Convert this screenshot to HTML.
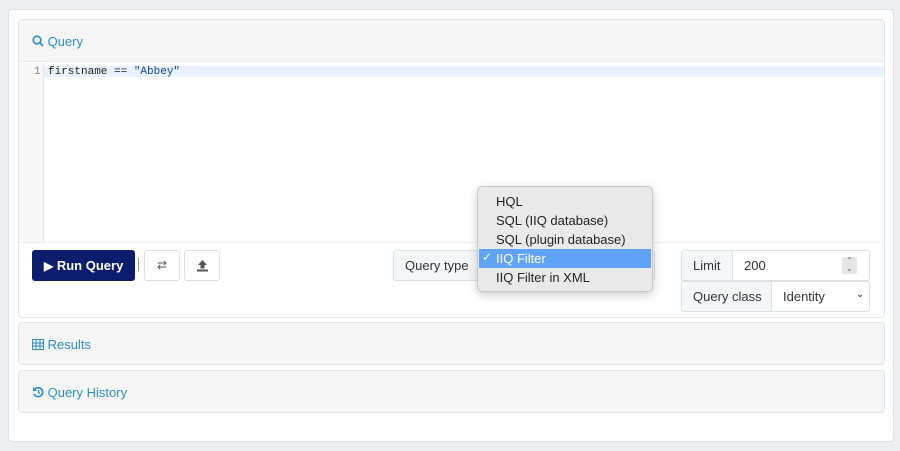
<!DOCTYPE html>
<html><head><style>
*{box-sizing:border-box;margin:0;padding:0}
body{width:900px;height:451px;background:#eceef1;font-family:"Liberation Sans",sans-serif;font-size:13px;color:#333;position:relative;overflow:hidden}
.a{position:absolute}
.card{left:8px;top:9px;width:886px;height:433px;background:#fff;border:1px solid #dde0e5;border-radius:4px}
.panel{left:18px;width:867px;background:#f5f5f5;border:1px solid #dfe2e6;border-radius:4px}
.ttl{color:#2a8fc8;font-size:13px}
.btn{border:1px solid #dcdfe4;border-radius:3px;background:#fff}
.grp{border:1px solid #dcdfe4;border-radius:3px;background:#f5f6f8}
</style></head><body>
<div class="a card"></div>
<div class="a panel" style="top:19px;height:299px;background:#fff"></div>
<div class="a" style="left:19px;top:20px;width:865px;height:42px;background:#f5f5f5;border-bottom:1px solid #e8e8e8"></div>
<div class="a ttl" style="left:32px;top:34px"><svg width="12" height="12" viewBox="0 0 12 12" style="vertical-align:-1px"><circle cx="5" cy="5" r="3.8" fill="none" stroke="#2a8fc8" stroke-width="1.6"/><path d="M8 8L11 11" stroke="#2a8fc8" stroke-width="1.8"/></svg> Query</div>
<div class="a" style="left:19px;top:63px;width:25px;height:179px;background:#f7f7f7;border-right:1px solid #e5e5e5"></div>
<div class="a" style="left:44px;top:66px;width:840px;height:11px;background:#e8f2fe"></div>
<div class="a" style="left:34px;top:66px;font-family:'Liberation Mono',monospace;font-size:11px;color:#888">1</div>
<div class="a" style="left:48px;top:66px;font-family:'Liberation Mono',monospace;font-size:11px;color:#222">firstname == <span style="color:#1a3fa8">"Abbey"</span></div>
<div class="a" style="left:19px;top:242px;width:865px;height:1px;background:#eee"></div>
<div class="a" style="left:32px;top:250px;width:103px;height:31px;background:#0d1d6e;border-radius:3px;color:#fff;font-weight:bold;font-size:13px;line-height:31px;padding-left:12px"><span style="font-size:12px">▶</span> Run Query</div>
<div class="a" style="left:138px;top:258px;width:1px;height:13px;background:#999"></div>
<div class="a btn" style="left:144px;top:250px;width:36px;height:31px;text-align:center;line-height:29px;font-size:12px;color:#555">⇄</div>
<div class="a btn" style="left:184px;top:250px;width:36px;height:31px"><svg class="a" style="left:11px;top:8px" width="13" height="13" viewBox="0 0 13 13"><path d="M6.5 1L11 6H8.5V9.5H4.5V6H2Z" fill="#555"/><rect x="1" y="10.5" width="11" height="2" fill="#555"/></svg></div>
<div class="a grp" style="left:393px;top:250px;width:262px;height:31px;background:#fff"></div>
<div class="a grp" style="left:393px;top:250px;width:90px;height:31px;line-height:29px;padding-left:11px;font-size:13px">Query type</div>
<div class="a grp" style="left:681px;top:250px;width:189px;height:31px;background:#fff"></div>
<div class="a grp" style="left:681px;top:250px;width:52px;height:31px;line-height:29px;padding-left:11px">Limit</div>
<div class="a" style="left:744px;top:258px">200</div>
<div class="a" style="left:842px;top:257px;width:15px;height:17px;background:#e5e5e5;border-radius:2px;font-size:8px;text-align:center;line-height:8px;color:#666">⌃<br>⌄</div>
<div class="a grp" style="left:681px;top:281px;width:189px;height:31px;background:#fff"></div>
<div class="a grp" style="left:681px;top:281px;width:91px;height:31px;line-height:29px;padding-left:11px">Query class</div>
<div class="a" style="left:783px;top:289px">Identity</div>
<div class="a" style="left:856px;top:289px;font-size:10px">⌄</div>
<div class="a" style="left:477px;top:186px;width:176px;height:106px;background:#e9e9e9;border:1px solid #c8c8c8;border-radius:5px;box-shadow:0 3px 10px rgba(0,0,0,.2)"></div>
<div class="a" style="left:479px;top:249px;width:172px;height:19px;background:#5ea3f8"></div>
<div class="a" style="left:496px;top:192px;line-height:19px;font-size:13px;color:#222">HQL<br>SQL (IIQ database)<br>SQL (plugin database)<br><span style="color:#fff">IIQ Filter</span><br>IIQ Filter in XML</div>
<div class="a" style="left:482px;top:250px;color:#fff;font-size:12px">✓</div>
<div class="a panel" style="top:322px;height:43px"></div>
<div class="a ttl" style="left:32px;top:337px"><svg width="12" height="11" viewBox="0 0 12 11" style="vertical-align:-1px"><rect x=".5" y=".5" width="11" height="10" fill="none" stroke="#2a8fc8"/><path d="M.5 4H11.5M.5 7H11.5M4 .5V10.5M8 .5V10.5" stroke="#2a8fc8"/></svg> Results</div>
<div class="a panel" style="top:370px;height:43px"></div>
<div class="a ttl" style="left:32px;top:385px"><svg width="12" height="12" viewBox="0 0 12 12" style="vertical-align:-1px"><path d="M2.5 3.5A4.5 4.5 0 1 1 2 8" fill="none" stroke="#2a8fc8" stroke-width="1.6"/><path d="M1 1V5H5Z" fill="#2a8fc8"/><path d="M6.5 4V6.5L8 7.5" fill="none" stroke="#2a8fc8" stroke-width="1.3"/></svg> Query History</div>
</body></html>
